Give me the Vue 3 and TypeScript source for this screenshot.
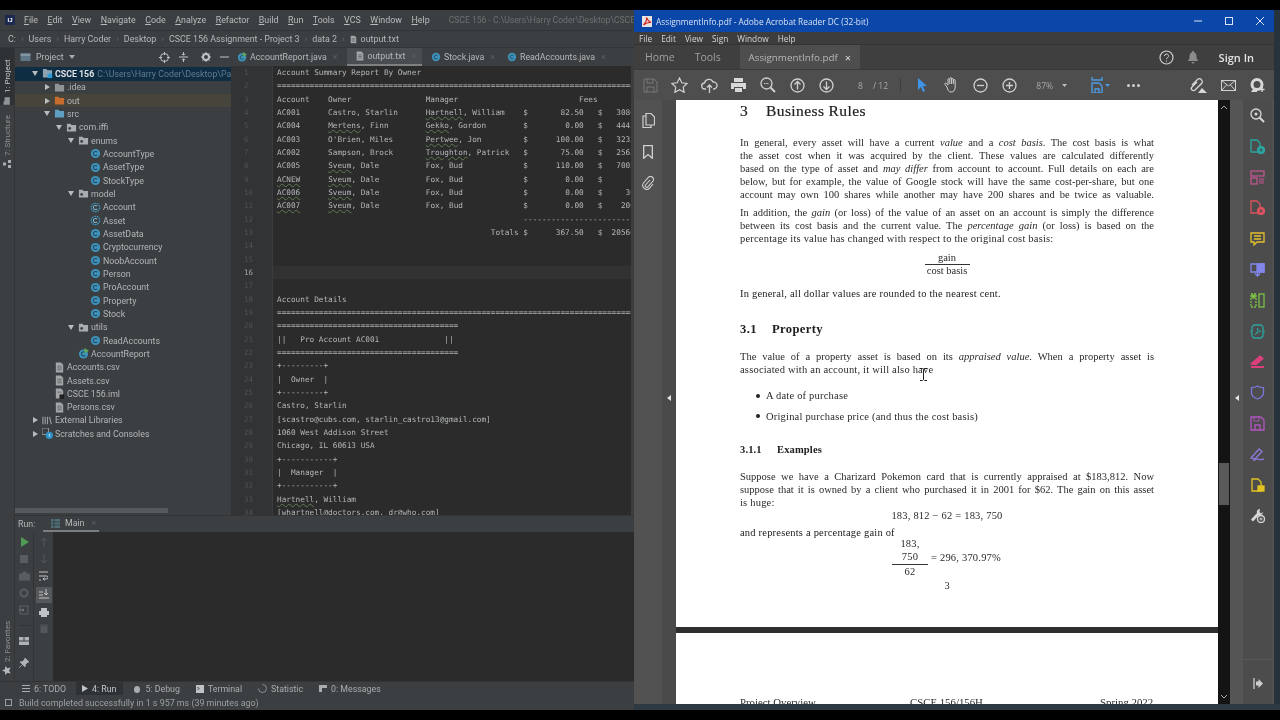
<script setup lang="ts">
const pad = (s: string, n: number) => s + ' '.repeat(Math.max(0, n - s.replace(/~/g, '').length))
const row = (a: string, o: string, m: string, f: string, r: string) =>
  pad(a, 11) + pad(o, 21) + pad(m, 21) + '$' + f.padStart(12) + '   $' + r

const rawLines: string[] = [
  'Account Summary Report By Owner',
  '='.repeat(90),
  pad('Account', 11) + pad('Owner', 21) + pad('Manager', 21) + '            Fees' .padStart(13) + '          R',
  row('AC001', 'Castro, Starlin', '~Hartnell~, William', '82.50', '   3086'),
  row('AC004', '~Mertens~, Finn', '~Gekko~, Gordon', '0.00', '   4442'),
  row('AC003', "O'Brien, Miles", '~Pertwee~, Jon', '100.00', '   3232'),
  row('AC002', 'Sampson, Brock', '~Troughton~, Patrick', '75.00', '   2565'),
  row('AC005', '~Sveum~, Dale', 'Fox, Bud', '110.00', '   7002'),
  row('~ACNEW~', '~Sveum~, Dale', 'Fox, Bud', '0.00', ''),
  row('~AC006~', '~Sveum~, Dale', 'Fox, Bud', '0.00', '     30'),
  row('~AC007~', '~Sveum~, Dale', 'Fox, Bud', '0.00', '    200'),
  ' '.repeat(53) + '-'.repeat(40),
  ' '.repeat(46) + 'Totals $' + '367.50'.padStart(12) + '   $  20560',
  '',
  '',
  '',
  '',
  'Account Details',
  '='.repeat(90),
  '='.repeat(39),
  '||   Pro Account AC001              ||',
  '='.repeat(39),
  '+---------+',
  '|  Owner  |',
  '+---------+',
  'Castro, Starlin',
  '[scastro@cubs.com, starlin_castro13@gmail.com]',
  '1060 West Addison Street',
  'Chicago, IL 60613 USA',
  '+-----------+',
  '|  Manager  |',
  '+-----------+',
  '~Hartnell~, William',
  '[whartnell@doctors.com, dr@who.com]',
]
const lines = rawLines.map((l, i) => ({
  n: i + 1,
  segs: l.split('~').map((t, k) => ({ t, typo: k % 2 === 1 })),
}))

type Node = { label: string; lvl: number; icon: string; arrow?: 'o' | 'c'; cls?: string; path?: string }
const tree: Node[] = [
  { label: 'CSCE 156', lvl: 0, icon: 'mod', arrow: 'o', cls: 'sel', path: 'C:\\Users\\Harry Coder\\Desktop\\PasswordManager' },
  { label: '.idea', lvl: 1, icon: 'folder', arrow: 'c' },
  { label: 'out', lvl: 1, icon: 'orange', arrow: 'c', cls: 'out' },
  { label: 'src', lvl: 1, icon: 'blue', arrow: 'o' },
  { label: 'com.iffi', lvl: 2, icon: 'pkg', arrow: 'o' },
  { label: 'enums', lvl: 3, icon: 'pkg', arrow: 'o' },
  { label: 'AccountType', lvl: 4, icon: 'cls' },
  { label: 'AssetType', lvl: 4, icon: 'cls' },
  { label: 'StockType', lvl: 4, icon: 'cls' },
  { label: 'model', lvl: 3, icon: 'pkg', arrow: 'o' },
  { label: 'Account', lvl: 4, icon: 'abs' },
  { label: 'Asset', lvl: 4, icon: 'abs' },
  { label: 'AssetData', lvl: 4, icon: 'cls' },
  { label: 'Cryptocurrency', lvl: 4, icon: 'cls' },
  { label: 'NoobAccount', lvl: 4, icon: 'cls' },
  { label: 'Person', lvl: 4, icon: 'cls' },
  { label: 'ProAccount', lvl: 4, icon: 'cls' },
  { label: 'Property', lvl: 4, icon: 'cls' },
  { label: 'Stock', lvl: 4, icon: 'cls' },
  { label: 'utils', lvl: 3, icon: 'pkg', arrow: 'o' },
  { label: 'ReadAccounts', lvl: 4, icon: 'cls' },
  { label: 'AccountReport', lvl: 3, icon: 'main' },
  { label: 'Accounts.csv', lvl: 1, icon: 'file' },
  { label: 'Assets.csv', lvl: 1, icon: 'file' },
  { label: 'CSCE 156.iml', lvl: 1, icon: 'iml' },
  { label: 'Persons.csv', lvl: 1, icon: 'file' },
  { label: 'External Libraries', lvl: 0, icon: 'libs', arrow: 'c' },
  { label: 'Scratches and Consoles', lvl: 0, icon: 'scr', arrow: 'c' },
]
const menu = ['File', 'Edit', 'View', 'Navigate', 'Code', 'Analyze', 'Refactor', 'Build', 'Run', 'Tools', 'VCS', 'Window', 'Help']
const crumbs = ['C:', 'Users', 'Harry Coder', 'Desktop', 'CSCE 156 Assignment - Project 3', 'data 2']
const tabs = [
  { t: 'AccountReport.java', icon: 'main' },
  { t: 'output.txt', icon: 'file', on: true },
  { t: 'Stock.java', icon: 'cls' },
  { t: 'ReadAccounts.java', icon: 'cls' },
]
const para1 = [
  ['In general, every asset will have a current ', 'value', ' and a ', 'cost basis', '. The cost basis is what'],
  ['the asset cost when it was acquired by the client. These values are calculated differently'],
  ['based on the type of asset and ', 'may differ', ' from account to account. Full details on each are'],
  ['below, but for example, the value of Google stock will have the same cost-per-share, but one'],
  ['account may own 100 shares while another may have 200 shares and be twice as valuable.'],
]
const para2 = [
  ['In addition, the ', 'gain', ' (or loss) of the value of an asset on an account is simply the difference'],
  ['between its cost basis and the current value. The ', 'percentage gain', ' (or loss) is based on the'],
]
const para3 = ['The value of a property asset is based on its ', 'appraised value', '. When a property asset is']
const para4 = [
  'Suppose we have a Charizard Pokemon card that is currently appraised at $183,812. Now',
  'suppose that it is owned by a client who purchased it in 2001 for $62. The gain on this asset',
]
const toolsRight = [
  { c: '#2ba5a0', k: 'doc', b: 'o' },
  { c: '#c0568f', k: 'org' },
  { c: '#d9535f', k: 'doc', b: 'p' },
  { c: '#e3c02d', k: 'cmt' },
  { c: '#8285ea', k: 'cmb' },
  { c: '#7cc143', k: 'cmp' },
  { c: '#2ba5a0', k: 'xpt' },
  { c: '#dd3f7d', k: 'sgn' },
  { c: '#7a78dc', k: 'shd' },
  { c: '#b356c4', k: 'sv' },
  { c: '#8f78d8', k: 'cert' },
  { c: '#e2c322', k: 'snd' },
  { c: '#d8d8d8', k: 'wr' },
]
</script>

<template>
  <div class="screen">
    <svg width="0" height="0" class="defs">
      <defs>
        <symbol id="i-folder" viewBox="0 0 12 10"><path d="M1 1h4l1 1.400h5v7H1z" fill="#8f9497" /></symbol>
        <symbol id="i-orange" viewBox="0 0 12 10"><path d="M1 1h4l1 1.400h5v7H1z" fill="#c66c2e" /></symbol>
        <symbol id="i-blue" viewBox="0 0 12 10"><path d="M1 1h4l1 1.400h5v7H1z" fill="#5e9fc2" /></symbol>
        <symbol id="i-pkg" viewBox="0 0 12 10"><path d="M1 1h4l1 1.400h5v7H1z" fill="#a9adaf" /><circle cx="4" cy="6" r="1.500" fill="#3c3f41" /></symbol>
        <symbol id="i-mod" viewBox="0 0 12 10"><path d="M1 0h4l1 1.400h5v8H1z" fill="#8fa2b0" /><rect x="6" y="5" width="5" height="5" fill="#2f9bd6" /></symbol>
        <symbol id="i-cls" viewBox="0 0 12 12"><circle cx="6" cy="6" r="5" fill="#3e93bd" /><path d="M7.800 4.500A2.300 2.300 0 1 0 7.800 7.500" fill="none" stroke="#24465a" stroke-width="1.100" /></symbol>
        <symbol id="i-abs" viewBox="0 0 12 12"><circle cx="6" cy="6" r="4.600" fill="none" stroke="#3e93bd" stroke-width="1.400" stroke-dasharray="2 .8" /><path d="M7.800 4.500A2.300 2.300 0 1 0 7.800 7.500" fill="none" stroke="#7fb6d0" stroke-width="1.100" /></symbol>
        <symbol id="i-main" viewBox="0 0 12 12"><circle cx="6" cy="6.500" r="5" fill="#3e93bd" /><path d="M7.800 5A2.300 2.300 0 1 0 7.800 8" fill="none" stroke="#24465a" stroke-width="1.100" /><path d="M7 0l5 3-5 3z" fill="#62a85a" /></symbol>
        <symbol id="i-file" viewBox="0 0 10 12"><path d="M1 .5h5.500L9 3v8.500H1z" fill="#a3a7a9" /><path d="M2.500 4.500h5M2.500 6.500h5M2.500 8.500h5" stroke="#5d6163" stroke-width=".9" /></symbol>
        <symbol id="i-iml" viewBox="0 0 10 12"><path d="M1 .5h5.500L9 3v8.500H1z" fill="#a3a7a9" /><path d="M2.500 4.500h5" stroke="#5d6163" stroke-width=".9" /><rect x="5" y="7" width="5" height="5" fill="#1e2022" /></symbol>
        <symbol id="i-libs" viewBox="0 0 12 10"><path d="M1 1v8M3.500 1v8M6 1v8M8.200 1l2 8" stroke="#9aa0a4" stroke-width="1.200" fill="none" /></symbol>
        <symbol id="i-scr" viewBox="0 0 12 12"><rect x="0" y="0" width="7" height="7" fill="none" stroke="#9aa0a4" /><circle cx="8" cy="8" r="4" fill="#2f95c8" /><path d="M8 6.500v3" stroke="#d6ecf7" /></symbol>
      </defs>
    </svg>

    <section class="ide">
      <header class="menubar">
        <span class="logo">IJ</span>
        <nav class="menus"><span v-for="m in menu" :key="m">{{ m }}</span></nav>
        <span class="ide-title">CSCE 156 - C:\Users\Harry Coder\Desktop\CSCE 156 Assignment - Project 3</span>
      </header>
      <div class="crumbs">
        <template v-for="c in crumbs" :key="c"><span>{{ c }}</span><i class="sep">›</i></template>
        <svg class="ic9" viewBox="0 0 10 12"><use href="#i-file" /></svg>
        <span>output.txt</span>
      </div>
      <div class="ide-body">
        <aside class="strip">
          <div class="vtab active"><svg width="9" height="8" viewBox="0 0 12 10"><use href="#i-folder" /></svg><span>1: Project</span></div>
          <div class="vtab"><svg width="8" height="8" viewBox="0 0 8 8"><path d="M2.500 0h3v3h-3zM0 5h3v3H0zM5 5h3v3H5z" fill="#a9adaf" /></svg><span>7: Structure</span></div>
          <div class="vtab fav"><svg width="9" height="9" viewBox="0 0 10 10"><path d="M5 0l1.500 3.300 3.500.4-2.600 2.300.8 3.600L5 7.800 1.800 9.600l.8-3.600L0 3.700l3.500-.4z" fill="#b4b8ba" /></svg><span>2: Favorites</span></div>
        </aside>
        <div class="ide-main">
          <div class="top">
            <div class="project">
              <div class="ph">
                <svg width="11" height="10" viewBox="0 0 11 10"><rect x=".5" y="1" width="10" height="8" fill="#5f7887" /><path d="M.5 3h10" stroke="#a9b4ba" /></svg>
                <span class="ph-t">Project</span>
                <svg width="6" height="4" viewBox="0 0 6 4"><path d="M0 0h6L3 4z" fill="#a9adaf" /></svg>
                <div class="ph-tools">
                  <svg width="11" height="11" viewBox="0 0 11 11"><circle cx="5.500" cy="5.500" r="4" fill="none" stroke="#c0c3c5" /><path d="M5.500 0v3M5.500 8v3M0 5.500h3M8 5.500h3" stroke="#c0c3c5" /></svg>
                  <svg width="9" height="10" viewBox="0 0 9 10"><path d="M0 5h9M4.500 0v3M3 1.800l1.500 1.500L6 1.800M4.500 10V7M3 8.200l1.500-1.500L6 8.200" stroke="#c0c3c5" fill="none" /></svg>
                  <svg class="gear" width="10" height="10" viewBox="0 0 10 10"><circle cx="5" cy="5" r="3" fill="none" stroke="#c0c3c5" stroke-width="2" /><path d="M5 0v2M5 8v2M0 5h2M8 5h2M1.500 1.500l1.300 1.300M7.200 7.200l1.300 1.300M8.500 1.500L7.200 2.800M1.500 8.500l1.300-1.300" stroke="#c0c3c5" /></svg>
                  <svg width="9" height="2" viewBox="0 0 9 2"><path d="M0 1h9" stroke="#c0c3c5" /></svg>
                </div>
              </div>
              <ul class="tree">
                <li v-for="n in tree" :key="n.label" class="node" :class="n.cls" :style="{ paddingLeft: 14 + n.lvl * 12 + 'px' }">
                  <span class="arrow"><i v-if="n.arrow" :class="n.arrow"></i></span>
                  <svg class="nic" viewBox="0 0 12 12"><use :href="'#i-' + n.icon" /></svg>
                  <b v-if="n.path">{{ n.label }}</b><span v-else>{{ n.label }}</span>
                  <em v-if="n.path">{{ n.path }}</em>
                </li>
              </ul>
              <div class="hscroll"><div class="thumb"></div></div>
            </div>
            <div class="editor">
              <div class="tabs">
                <div v-for="t in tabs" :key="t.t" class="tab" :class="{ on: t.on }">
                  <svg class="tic" viewBox="0 0 12 12"><use :href="'#i-' + t.icon" /></svg>
                  <span>{{ t.t }}</span><i>×</i>
                </div>
              </div>
              <div class="code">
                <div v-for="l in lines" :key="l.n" class="ln" :class="{ cur: l.n === 16 }">
                  <span class="num">{{ l.n }}</span>
                  <span class="txt"><template v-for="(s, k) in l.segs" :key="k"><span :class="{ typo: s.typo }">{{ s.t }}</span></template></span>
                </div>
              </div>
            </div>
          </div>
          <div class="run">
            <div class="run-head">
              <span class="run-l">Run:</span>
              <div class="run-tab">
                <svg width="9" height="9" viewBox="0 0 9 9"><rect width="9" height="9" fill="#4e6f78" /><path d="M0 3h9M0 6h9M3 0v9" stroke="#333" stroke-width=".7" /></svg>
                <span>Main</span><i>×</i>
              </div>
            </div>
            <div class="run-body">
              <div class="rtools a">
                <svg width="9" height="10" viewBox="0 0 9 10"><path d="M1 0l8 5-8 5z" fill="#4f9b52" /></svg>
                <svg width="8" height="8" viewBox="0 0 8 8"><rect width="8" height="8" fill="#5a5d5f" /></svg>
                <svg width="11" height="9" viewBox="0 0 11 9"><path d="M0 2h3l1-2h3l1 2h3v7H0z" fill="#5a5d5f" /></svg>
                <svg width="10" height="10" viewBox="0 0 10 10"><circle cx="5" cy="5" r="3.500" fill="none" stroke="#5a5d5f" stroke-width="2" /></svg>
                <svg width="10" height="10" viewBox="0 0 10 10"><path d="M1 1h8v8H1z" fill="none" stroke="#5f6264" /><path d="M0 5h5M3.500 3.500L5 5 3.500 6.500" fill="none" stroke="#7a7d7f" /></svg>
                <i class="rsep"></i>
                <svg width="10" height="8" viewBox="0 0 10 8"><path d="M0 0h4.500v3.500H0zM5.500 0H10v3.500H5.500zM0 4.500h10V8H0z" fill="#b0b3b5" /></svg>
                <svg class="pin" width="10" height="10" viewBox="0 0 10 10"><path d="M6 0l4 4-1.500.5L6.500 6.500 6 9 1 4l2.500-.5L5.500 1.500zM3 7L0 10" fill="#b0b3b5" stroke="#b0b3b5" stroke-width=".7" /></svg>
              </div>
              <div class="rtools b">
                <svg width="8" height="10" viewBox="0 0 8 10"><path d="M4 10V1M1 4l3-3 3 3" fill="none" stroke="#55585a" /></svg>
                <svg width="8" height="10" viewBox="0 0 8 10"><path d="M4 0v9M1 6l3 3 3-3" fill="none" stroke="#55585a" /></svg>
                <svg width="9" height="11" viewBox="0 0 9 11"><path d="M0 1h9M0 5h7.500a1.500 1.500 0 0 1 0 3H4M5.500 6.500L4 8l1.500 1.500M0 9h2" fill="none" stroke="#c0c3c5" /></svg>
                <span class="rbox"><svg width="10" height="10" viewBox="0 0 10 10"><path d="M0 3h4M0 6h4M0 9h10M7 0v6M5 4l2 2 2-2" fill="none" stroke="#c0c3c5" /></svg></span>
                <svg width="10" height="9" viewBox="0 0 10 9"><path d="M2 0h6v3H2zM0 3h10v4H8v2H2V7H0z" fill="#c0c3c5" /></svg>
                <svg width="8" height="9" viewBox="0 0 8 9"><path d="M0 1h8M1 2v7h6V2" fill="#55585a" stroke="#55585a" /></svg>
              </div>
              <div class="console"></div>
            </div>
          </div>
        </div>
      </div>
      <div class="toolbar">
        <span class="tw"><svg width="8" height="7" viewBox="0 0 8 7"><path d="M0 .5h8M0 3.500h8M0 6.500h8" stroke="#a9adaf" /></svg>6: TODO</span>
        <span class="tw act"><svg width="6" height="7" viewBox="0 0 6 7"><path d="M0 0l6 3.500L0 7z" fill="#c0c3c5" /></svg>4: Run</span>
        <span class="tw"><svg width="8" height="8" viewBox="0 0 8 8"><ellipse cx="4" cy="4.500" rx="3" ry="3.500" fill="#a9adaf" /></svg>5: Debug</span>
        <span class="tw"><svg width="8" height="8" viewBox="0 0 8 8"><rect width="8" height="8" fill="#c0c3c5" /><path d="M1.500 2l1.500 1.500L1.500 5" stroke="#333" fill="none" /></svg>Terminal</span>
        <span class="tw"><svg width="9" height="9" viewBox="0 0 9 9"><path d="M4.500.5a4 4 0 1 1-4 4" fill="none" stroke="#8a8d8f" /></svg>Statistic</span>
        <span class="tw"><svg width="8" height="7" viewBox="0 0 8 7"><path d="M0 0h8v3H3v4H0z" fill="#a9adaf" /></svg>0: Messages</span>
      </div>
      <footer class="status">
        <svg width="7" height="7" viewBox="0 0 7 7"><rect x=".5" y=".5" width="6" height="6" fill="none" stroke="#9a9d9f" /></svg>
        <span>Build completed successfully in 1 s 957 ms (39 minutes ago)</span>
      </footer>
    </section>

    <section class="acro">
      <header class="title">
        <svg width="10" height="11" viewBox="0 0 10 11"><rect width="10" height="11" fill="#e8e3e3" /><path d="M1.500 9C4 6 5 3.500 4.500 1.500c1 2.500 2 4 4.500 5-2.500-.3-5 .6-7.500 2.500z" fill="none" stroke="#d0281f" stroke-width="1.200" /></svg>
        <span class="t-text">AssignmentInfo.pdf - Adobe Acrobat Reader DC (32-bit)</span>
        <div class="win">
          <svg width="8" height="8" viewBox="0 0 8 8"><path d="M0 4h8" stroke="#d7e3f5" /></svg>
          <svg width="8" height="8" viewBox="0 0 8 8"><rect x=".5" y=".5" width="7" height="7" fill="none" stroke="#d7e3f5" /></svg>
          <svg width="8" height="8" viewBox="0 0 8 8"><path d="M0 0l8 8M8 0L0 8" stroke="#d7e3f5" /></svg>
        </div>
      </header>
      <div class="a-menu"><span>File</span><span>Edit</span><span>View</span><span>Sign</span><span>Window</span><span>Help</span></div>
      <div class="a-tabs">
        <span class="a-home">Home</span><span class="a-tools">Tools</span>
        <div class="a-doc"><span>AssignmentInfo.pdf</span><b>×</b></div>
        <div class="a-right">
          <svg width="15" height="15" viewBox="0 0 15 15"><circle cx="7.500" cy="7.500" r="6.500" fill="none" stroke="#d0d0d0" stroke-width="1.200" /><path d="M5.500 6a2 2 0 1 1 3 1.700c-.7.4-1 .8-1 1.500M7.500 10.500v1.200" fill="none" stroke="#d0d0d0" /></svg>
          <svg class="bell" width="12" height="13" viewBox="0 0 12 13"><path d="M6 0a1 1 0 0 1 1 1.200C9 2 9.500 3.500 9.500 6c0 2 1 3 2 4H.5c1-1 2-2 2-4 0-2.500.5-4 2.500-4.800A1 1 0 0 1 6 0zM4.500 11h3a1.500 1.500 0 0 1-3 0z" fill="#8b8b8b" /></svg>
          <span class="signin">Sign In</span>
        </div>
      </div>
      <div class="a-bar">
        <div class="slot"><svg width="15" height="15" viewBox="0 0 15 15"><path d="M1 1h10l3 3v10H1z M4 1v4h6V1M4 14V9h7v5" fill="none" stroke="#777" /></svg></div>
        <div class="slot"><svg width="17" height="16" viewBox="0 0 17 16"><path d="M8.500 1l2.300 4.800 5.200.7-3.800 3.600 1 5.200-4.700-2.600-4.700 2.600 1-5.200L1 6.500l5.200-.7z" fill="none" stroke="#d0d0d0" stroke-width="1.200" /></svg></div>
        <div class="slot"><svg width="17" height="15" viewBox="0 0 17 15"><path d="M5 11H4a3 3 0 0 1-.5-6A4.500 4.500 0 0 1 12 4a3.500 3.500 0 0 1 1 7h-1M8.500 15V7M6 9.500l2.500-2.500L11 9.500" fill="none" stroke="#d0d0d0" stroke-width="1.300" /></svg></div>
        <div class="slot"><svg width="15" height="14" viewBox="0 0 15 14"><path d="M3 0h9v4H3zM0 5h15v6h-3V9H3v2H0zM4 10h7v4H4z" fill="#d8d8d8" /></svg></div>
        <div class="slot"><svg width="16" height="16" viewBox="0 0 16 16"><circle cx="6.500" cy="6.500" r="5.500" fill="none" stroke="#d0d0d0" stroke-width="1.300" /><path d="M10.500 10.500L15 15" stroke="#d0d0d0" stroke-width="2" /><path d="M4 6.500h5" stroke="#d0d0d0" stroke-dasharray="1.500 .8" /></svg></div>
        <div class="slot"><svg width="15" height="15" viewBox="0 0 15 15"><circle cx="7.500" cy="7.500" r="6.500" fill="none" stroke="#d0d0d0" stroke-width="1.300" /><path d="M7.500 11.500v-8M4.500 6.500l3-3 3 3" fill="none" stroke="#d0d0d0" stroke-width="1.300" /></svg></div>
        <div class="slot"><svg width="15" height="15" viewBox="0 0 15 15"><circle cx="7.500" cy="7.500" r="6.500" fill="none" stroke="#d0d0d0" stroke-width="1.300" /><path d="M7.500 3.500v8M4.500 8.500l3 3 3-3" fill="none" stroke="#d0d0d0" stroke-width="1.300" /></svg></div>
        <div class="pg"><span>8</span><span class="pg2">/ 12</span></div>
        <i class="bar-sep"></i>
        <div class="slot"><svg width="10" height="14" viewBox="0 0 10 14"><path d="M1 0l9 8H6l2 5-2 1-2-5-3 3z" fill="#3f94e8" /></svg></div>
        <div class="slot"><svg width="15" height="16" viewBox="0 0 15 16"><path d="M3 10L1 7.500c-.7-1 .5-2 1.500-1L4 8V2.500a.9.9 0 0 1 1.800 0V1.500a.9.9 0 0 1 1.800 0v1a.9.9 0 0 1 1.800 0v1a.9.9 0 0 1 1.800 0V10c0 3-1.500 5-4 5s-3.500-2-4.200-5zM5.800 2.500V7M7.600 2v5M9.400 3v4" fill="none" stroke="#d0d0d0" /></svg></div>
        <div class="slot"><svg width="15" height="15" viewBox="0 0 15 15"><circle cx="7.500" cy="7.500" r="6.500" fill="none" stroke="#d0d0d0" stroke-width="1.300" /><path d="M4 7.500h7" stroke="#d0d0d0" stroke-width="1.300" /></svg></div>
        <div class="slot"><svg width="15" height="15" viewBox="0 0 15 15"><circle cx="7.500" cy="7.500" r="6.500" fill="none" stroke="#d0d0d0" stroke-width="1.300" /><path d="M4 7.500h7M7.500 4v7" stroke="#d0d0d0" stroke-width="1.300" /></svg></div>
        <span class="zoomv">87%</span>
        <svg class="car" width="5" height="3" viewBox="0 0 5 3"><path d="M0 0h5L2.500 3z" fill="#bdbdbd" /></svg>
        <svg class="fit" width="12" height="16" viewBox="0 0 12 16"><path d="M1 0v3h10V0M1 16V6h7l3 3v7zM4 16v-4h4v4" fill="none" stroke="#4e9ae0" stroke-width="1.400" /></svg>
        <svg class="car2" width="5" height="3" viewBox="0 0 5 3"><path d="M0 0h5L2.500 3z" fill="#4e9ae0" /></svg>
        <span class="dots"><i></i><i></i><i></i></span>
        <div class="a-bar-r">
          <svg width="18" height="17" viewBox="0 0 18 17"><path d="M9 7l-5 5a2 2 0 0 0 3 3l7-7a3 3 0 0 0-4-4L4 10" fill="none" stroke="#d8d8d8" stroke-width="1.300" transform="translate(-1 -2)" /><path d="M9 16l4-5 5 5z" fill="#d8d8d8" /></svg>
          <svg width="15" height="11" viewBox="0 0 15 11"><rect x=".5" y=".5" width="14" height="10" fill="none" stroke="#d0d0d0" /><path d="M.5.5L7.500 6l7-5.500M.5 10.500L5.500 5M14.500 10.500L9.500 5" fill="none" stroke="#d0d0d0" /></svg>
          <svg width="15" height="15" viewBox="0 0 15 15"><circle cx="7" cy="6.500" r="5" fill="none" stroke="#d8d8d8" stroke-width="3" /><path d="M1 14c1-3 3-3.500 6-3.500V14z" fill="#d8d8d8" /><path d="M12 9v5M9.500 11.500h5" stroke="#d8d8d8" stroke-width="1.300" /></svg>
        </div>
      </div>
      <div class="a-main">
        <aside class="a-left">
          <svg width="13" height="15" viewBox="0 0 13 15"><path d="M4 .5h5l3.500 3.500v8H4zM4 3H1v11.500h8V12" fill="none" stroke="#d0d0d0" stroke-width="1.200" /></svg>
          <svg width="10" height="14" viewBox="0 0 10 14"><path d="M.7.700h8.600v12.600L5 9.500.7 13.300z" fill="none" stroke="#d0d0d0" stroke-width="1.300" /></svg>
          <svg width="12" height="14" viewBox="0 0 12 14"><path d="M8 4l-4.500 5a1.500 1.500 0 0 0 2.200 2L11 5a3 3 0 0 0-4.300-4L1.500 7a4 4 0 0 0 5.700 5.500L11 8" fill="none" stroke="#d0d0d0" stroke-width="1.100" /></svg>
        </aside>
        <div class="a-gut"><i class="tri-l"></i></div>
        <div class="doc">
          <article class="page p1">
            <h1><span>3</span>Business Rules</h1>
            <div class="para first">
              <div v-for="(l, i) in para1" :key="i" class="j"><template v-for="(s, k) in l" :key="k"><em v-if="k % 2">{{ s }}</em><template v-else>{{ s }}</template></template></div>
            </div>
            <div class="para second">
              <div v-for="(l, i) in para2" :key="i" class="j"><template v-for="(s, k) in l" :key="k"><em v-if="k % 2">{{ s }}</em><template v-else>{{ s }}</template></template></div>
              <div class="l">percentage its value has changed with respect to the original cost basis:</div>
            </div>
            <div class="frac f1"><span class="up">gain</span><span class="dn">cost basis</span></div>
            <p class="l gen">In general, all dollar values are rounded to the nearest cent.</p>
            <h2><span>3.1</span>Property</h2>
            <div class="para pr">
              <div class="j">{{ para3[0] }}<em>{{ para3[1] }}</em>{{ para3[2] }}</div>
              <div class="l">associated with an account, it will also have</div>
            </div>
            <ul class="bul">
              <li><i></i>A date of purchase</li>
              <li class="b2"><i></i>Original purchase price (and thus the cost basis)</li>
            </ul>
            <h3><span>3.1.1</span>Examples</h3>
            <div class="para ex">
              <div v-for="l in para4" :key="l" class="j">{{ l }}</div>
              <div class="l">is huge:</div>
            </div>
            <div class="eq">183, 812 − 62 = 183, 750</div>
            <p class="l rep">and represents a percentage gain of</p>
            <div class="eq2">
              <div class="frac f2"><span class="up">183, 750</span><span class="dn">62</span></div>
              <span>= 296, 370.97%</span>
            </div>
            <div class="pnum">3</div>
            <svg class="ibeam" width="7" height="13" viewBox="0 0 7 13"><path d="M0 .5h2.500l1 1 1-1H7M3.500 1.500v10M0 12.500h2.500l1-1 1 1H7" fill="none" stroke="#222" /></svg>
          </article>
          <article class="page p2">
            <div class="foot"><span>Project Overview</span><span>CSCE 156/156H</span><span>Spring 2022</span></div>
          </article>
        </div>
        <div class="a-scroll">
          <svg width="6" height="4" viewBox="0 0 6 4"><path d="M0 4l3-3 3 3" fill="none" stroke="#aaa" /></svg>
          <i class="a-thumb"></i>
          <svg width="6" height="4" viewBox="0 0 6 4"><path d="M0 0l3 3 3-3" fill="none" stroke="#aaa" /></svg>
        </div>
        <div class="a-gut2"><i class="tri-l"></i></div>
        <aside class="a-rail">
          <svg width="15" height="15" viewBox="0 0 15 15"><circle cx="6" cy="6" r="5" fill="none" stroke="#d8d8d8" stroke-width="1.300" /><path d="M9.500 9.500L14 14" stroke="#d8d8d8" stroke-width="2" /><circle cx="6" cy="6" r="1.500" fill="#d8d8d8" /></svg>
          <svg v-for="t in toolsRight" :key="t.c + t.k" width="15" height="15" viewBox="0 0 15 15" fill="none" :stroke="t.c" stroke-width="1.300">
            <template v-if="t.k === 'doc'"><path d="M1 1h6l3 3v9H1z" /><circle cx="11" cy="11" r="3.500" :fill="t.c" /><path d="M9.500 11h3M11 9.500v3" stroke="#444" stroke-width=".9" /></template>
            <template v-else-if="t.k === 'org'"><rect x="1" y="1" width="13" height="5" /><rect x="1" y="8" width="6" height="6" /><path d="M9 9h5M9 11h5M9 13h5" stroke-width="1" /></template>
            <template v-else-if="t.k === 'cmt'"><path d="M1 2h13v9H7l-3 3v-3H1z" /><path d="M4 5h7M4 8h7" /></template>
            <template v-else-if="t.k === 'cmb'"><path d="M1 2h6v8H1zM8 2h6v8H8z" /><path d="M8 2h6v8H8z" :fill="t.c" /><path d="M7.500 9v5M5 11.500l2.500 2.500 2.500-2.500" /></template>
            <template v-else-if="t.k === 'cmp'"><rect x="1" y="1" width="5" height="13" stroke-dasharray="2 1" /><rect x="9" y="1" width="5" height="13" /><rect x="1.500" y="1.500" width="4" height="4" :fill="t.c" stroke="none" /></template>
            <template v-else-if="t.k === 'xpt'"><path d="M4 1h7l2 2v9l-2 2H4l-2-2V3z" /><path d="M0 7.500l2-2M0 7.500l2 2M15 7.500l-2-2M15 7.500l-2 2M5 11c2-2 3-5 2.500-7 .5 2 2 3 3.500 3.500-2 0-4 1.500-6 3.500z" stroke-width=".9" /></template>
            <template v-else-if="t.k === 'sgn'"><path d="M1 10L10 2l3 2.500-7 6z" :fill="t.c" /><path d="M1 13h13" stroke-width="2" /></template>
            <template v-else-if="t.k === 'shd'"><path d="M7.500 1c2 1.300 4 1.700 6 1.700v5c0 3-2.500 5-6 6.300-3.500-1.300-6-3.300-6-6.300v-5c2 0 4-.4 6-1.700z" /></template>
            <template v-else-if="t.k === 'sv'"><path d="M1 1h10l3 3v10H1z" /><path d="M5 14V9h5v5" /><path d="M4 1v4h5V1" stroke-width=".9" /></template>
            <template v-else-if="t.k === 'cert'"><path d="M1 11L9 2l3 2.500L5 12z" /><path d="M3 13c3 1 2-2 5-1s2 1 6 0" /></template>
            <template v-else-if="t.k === 'snd'"><path d="M2 1h6l3 3v9H2z" /><rect x="8" y="8" width="6" height="5" :fill="t.c" /></template>
            <template v-else-if="t.k === 'wr'"><path d="M10 1a3 3 0 0 0-3 4L1 11.500 3 13.500 9 7a3 3 0 0 0 4-3l-2 1.500L9.500 4z" :fill="t.c" stroke="none" /><circle cx="11" cy="11" r="3.500" /><path d="M9.500 11h3M11 9.500v3" stroke-width=".9" /></template>
          </svg>
          <div class="rail-end">
            <svg width="10" height="11" viewBox="0 0 10 11"><path d="M1 0v11" stroke="#ccc" stroke-width="1.300" /><path d="M3 3.500h2.500V1L10 5.500 5.500 10V7.500H3z" fill="#ccc" /></svg>
          </div>
        </aside>
      </div>
    </section>
  </div>
</template>

<style>
html, body { margin: 0; background: #000; }
</style>

<style scoped>
.screen { width: 1280px; height: 720px; background: #000; padding: 10px 0; box-sizing: border-box; display: flex; overflow: hidden; font-family: Roboto, "Liberation Sans", sans-serif; filter: blur(.3px); }
.defs { position: absolute; }
i { font-style: normal; }
ul { list-style: none; margin: 0; padding: 0; }

/* IDE */
.ide { width: 634px; height: 700px; flex: none; background: #3c3f41; color: #b5b8ba; display: flex; flex-direction: column; font-size: 8.8px; }
.menubar { height: 20px; flex: none; display: flex; align-items: center; padding-left: 5px; overflow: hidden; white-space: nowrap; }
.logo { width: 10px; height: 10px; background: #1c2a52; color: #fff; font: bold 6px/10px "Liberation Sans", sans-serif; text-align: center; flex: none; }
.menus { display: flex; gap: 9.500px; margin-left: 9px; font-size: 8.900px; color: #b9bcbe; }
.menus span::first-letter { text-decoration: underline; }
.ide-title { margin-left: 19px; color: #6d7173; font-size: 8.600px; }
.crumbs { height: 18px; flex: none; display: flex; align-items: center; gap: 4px; padding-left: 8px; font-size: 8.900px; border-top: 1px solid #333638; border-bottom: 1px solid #333638; box-sizing: border-box; }
.sep { color: #666; margin: 0 1px; }
.ic9 { width: 7px; height: 9px; }
.ide-body { flex: 1; min-height: 0; display: flex; }
.strip { width: 15px; flex: none; display: flex; flex-direction: column; border-right: 1px solid #323436; box-sizing: border-box; position: relative; }
.vtab { writing-mode: vertical-rl; transform: rotate(180deg); display: flex; align-items: center; justify-content: flex-start; gap: 4px; height: 57px; width: 14px; font-size: 8px; flex: none; }
.vtab.active { background: #2f3234; color: #c4c7c9; margin-top: 0; }
.vtab:nth-child(2) { margin-top: 6px; color: #8e9193; }
.vtab svg { transform: rotate(90deg); }
.vtab.fav { margin-top: auto; margin-bottom: 6px; color: #8e9193; }
.ide-main { flex: 1; min-width: 0; display: flex; flex-direction: column; }
.top { height: 467px; flex: none; display: flex; }
.project { width: 216px; flex: none; display: flex; flex-direction: column; }
.ph { height: 18px; flex: none; display: flex; align-items: center; padding-left: 5px; gap: 5px; }
.ph-t { font-size: 8.800px; }
.ph-tools { margin-left: 79px; display: flex; align-items: center; gap: 9px; }
.gear { margin-left: 4px; }
.tree { flex: 1; min-height: 0; padding-top: 1.300px; overflow: hidden; }
.node { height: 13.330px; display: flex; align-items: center; white-space: nowrap; overflow: hidden; font-size: 8.800px; color: #b3b6b8; }
.node.sel { background: #0e2c42; color: #dfe3e6; }
.node.sel b { font-weight: 700; font-size: 8.800px; }
.node.sel em { font-style: normal; color: #5f7c90; margin-left: 3px; }
.node.out { background: #47443c; }
.arrow { width: 12px; flex: none; display: flex; justify-content: center; }
.arrow i { display: block; width: 0; height: 0; }
.arrow .o { border-left: 3px solid transparent; border-right: 3px solid transparent; border-top: 5px solid #b9bcbe; }
.arrow .c { border-top: 3px solid transparent; border-bottom: 3px solid transparent; border-left: 5px solid #b9bcbe; }
.nic { width: 11px; height: 11px; flex: none; margin-right: 3px; margin-left: 1px; margin-right: 2px; }
.hscroll { height: 5px; margin-bottom: 2px; flex: none; }
.thumb { width: 153px; height: 5px; background: #575a5c; }
.editor { flex: 1; min-width: 0; display: flex; flex-direction: column; background: #2b2b2b; overflow: hidden; }
.tabs { height: 18px; flex: none; background: #3c3f41; display: flex; white-space: nowrap; overflow: hidden; }
.tab { display: flex; align-items: center; padding: 0 6px 0 6px; gap: 3px; font-size: 8.800px; box-sizing: border-box; }
.tab .tic { width: 10px; height: 10px; flex: none; }
.tab i { color: #5e6163; margin-left: 3px; }
.tab.on { background: #4a4d4f; border-bottom: 2px solid #7d8082; margin: 0 3px; padding-left: 8px; }
.code { flex: 1; min-height: 0; overflow: hidden; font-family: "DejaVu Sans Mono", "Liberation Mono", monospace; font-size: 7.720px; color: #b3b6b8; border-right: 3px solid #3b3d3f; }
.ln { height: 13.330px; line-height: 13.330px; display: flex; white-space: pre; }
.num { width: 42px; box-sizing: border-box; padding-left: 13px; flex: none; background: #313335; color: #4e5254; font-size: 7.500px; border-right: 1px solid #3a3c3e; }
.txt { padding-left: 4px; }
.ln.cur .txt { flex: 1; background: #323232; }
.ln.cur .num { color: #a4a7a9; }
.typo { text-decoration: underline wavy #5f7a50 .5px; text-underline-offset: 1px; }
.run { flex: 1; min-height: 0; display: flex; flex-direction: column; border-top: 1px solid #323436; box-sizing: border-box; }
.run-head { height: 16px; flex: none; display: flex; align-items: center; }
.run-l { padding-left: 3px; width: 25px; font-size: 8.800px; }
.run-tab { width: 56px; height: 16px; display: flex; align-items: center; gap: 5px; padding-left: 8px; box-sizing: border-box; border-bottom: 2px solid #7b7e80; font-size: 8.800px; }
.run-tab i { color: #5e6163; margin-left: 2px; }
.run-body { flex: 1; min-height: 0; display: flex; }
.rtools { flex: none; display: flex; flex-direction: column; align-items: center; padding-top: 5px; }
.rtools.a { width: 18px; gap: 7px; border-right: 1px solid #323436; }
.rtools.a svg { height: 10px; }
.rtools.b { width: 19px; gap: 7px; }
.rsep { width: 13px; height: 1px; background: #323436; margin: 3px 0; }
.pin { margin-top: 5px; }
.rbox { background: #56595b; padding: 2px 3px; margin: -2px 0; display: block; height: 12px; }
.console { flex: 1; background: #2b2b2b; }
.toolbar { height: 14px; flex: none; display: flex; align-items: center; padding-left: 22px; gap: 16px; font-size: 8.800px; border-top: 1px solid #323436; box-sizing: border-box; }
.tw { display: flex; align-items: center; gap: 4px; height: 13px; color: #a9acae; }
.tw.act { background: #2f3234; padding: 0 7px 0 6px; margin: 0 -6px; color: #c4c7c9; }
.status { height: 15px; flex: none; display: flex; align-items: center; gap: 7px; padding-left: 5px; font-size: 8.900px; color: #9c9fa1; }

/* Acrobat */
.acro { width: 646px; height: 694px; flex: none; background: #4e4e4e; display: flex; flex-direction: column; color: #d0d0d0; border-right: 6px solid #27333c; box-sizing: border-box; box-shadow: 0 6px 0 #2d3a44; font-family: "Open Sans", "Liberation Sans", sans-serif; }
.title { height: 22px; flex: none; background: #0b47a8; display: flex; align-items: center; padding-left: 8px; gap: 4px; color: #d8e3f5; font-size: 8.600px; white-space: nowrap; }
.t-text { font-size: 8.300px; }
.win { margin-left: auto; display: flex; gap: 23px; align-items: center; padding-right: 10px; }
.a-menu { height: 12px; flex: none; background: #3d3d3d; display: flex; gap: 9px; align-items: center; padding-left: 5px; font-size: 8.300px; color: #d5d5d5; }
.a-tabs { height: 25px; flex: none; background: #3f3f3f; display: flex; align-items: stretch; border-top: 1px solid #333; box-sizing: border-box; }
.a-home, .a-tools { font-size: 10.500px; color: #a0a0a0; align-self: center; }
.a-home { margin-left: 11px; }
.a-tools { margin-left: 20px; }
.a-doc { margin-left: 19px; width: 120px; background: #4e4e4e; display: flex; align-items: center; justify-content: center; gap: 7px; font-size: 9.800px; color: #b8b8b8; }
.a-doc b { color: #ddd; font-weight: 400; font-size: 11px; }
.a-right { margin-left: auto; display: flex; align-items: center; padding-right: 20px; }
.bell { margin-left: 13px; }
.signin { margin-left: 20px; font-size: 11px; font-weight: 600; color: #e2e2e2; }
.a-bar { height: 31px; flex: none; display: flex; align-items: center; padding-left: 2px; border-top: 1px solid #3a3a3a; box-sizing: border-box; }
.slot { width: 29.300px; flex: none; display: flex; justify-content: center; }
.pg { width: 58px; display: flex; font-size: 8.500px; color: #a8a8a8; padding-left: 17px; box-sizing: border-box; gap: 10px; }
.pg2 { white-space: nowrap; }
.bar-sep { width: 1px; height: 14px; background: #3e3e3e; margin: 0 6px 0 1px; }
.zoomv { margin-left: 12px; font-size: 8.500px; color: #a8a8a8; }
.car { margin-left: 9px; }
.fit { margin-left: 24px; }
.car2 { margin-left: 2px; }
.dots { display: flex; gap: 2px; margin-left: 17px; }
.dots i { width: 3px; height: 3px; border-radius: 50%; background: #d0d0d0; }
.a-bar-r { margin-left: auto; display: flex; align-items: center; gap: 14px; padding-right: 9px; }
.a-main { flex: 1; min-height: 0; display: flex; background: #525252; }
.a-left { width: 28px; flex: none; display: flex; flex-direction: column; align-items: center; gap: 17px; padding-top: 13px; box-sizing: border-box; background: #525252; }
.a-gut { width: 14px; flex: none; background: #4a4a4a; display: flex; align-items: center; justify-content: center; padding-bottom: 8px; box-sizing: border-box; }
.a-gut2 { width: 13px; flex: none; background: #555; display: flex; align-items: center; justify-content: center; padding-bottom: 8px; box-sizing: border-box; }
.tri-l { width: 0; height: 0; border-top: 3.500px solid transparent; border-bottom: 3.500px solid transparent; border-right: 4px solid #e2e2e2; }
.doc { width: 542px; flex: none; overflow: hidden; background: #2e2e2e; font-family: "Liberation Serif", "Times New Roman", serif; color: #2a2a2a; font-size: 10.500px; line-height: 13px; }
.page { background: #fff; box-sizing: border-box; padding: 0 64px; position: relative; }
.p1 { height: 527px; margin-bottom: 6px; }
.p2 { height: 120px; padding-top: 63px; }
h1, h2, h3, p { margin: 0; font-family: inherit; color: #202020; }
h1 { font-size: 15.500px; line-height: 22px; font-weight: 400; letter-spacing: .4px; -webkit-text-stroke: .2px #202020; }
h1 span { display: inline-block; width: 26px; }
h2 { font-size: 12.600px; line-height: 16px; margin-top: 21px; font-weight: 700; letter-spacing: .35px; }
h2 span { display: inline-block; width: 32px; }
h3 { font-size: 10.500px; line-height: 14px; margin-top: 20.500px; font-weight: 700; letter-spacing: .15px; }
h3 span { display: inline-block; width: 37px; }
.j { text-align: justify; text-align-last: justify; height: 13px; white-space: nowrap; }
.l { white-space: nowrap; letter-spacing: .2px; }
.first { margin-top: 14px; }
.second { margin-top: 5px; }
.frac { display: flex; flex-direction: column; align-items: center; }
.frac .up { border-bottom: 1px solid #333; align-self: stretch; text-align: center; }
.f1 { width: 45px; margin: 6px auto 0; }
.f1 .dn { line-height: 12px; }
.gen { margin-top: 10px; }
.pr { margin-top: 12.500px; }
.bul { margin-top: 13.500px; padding-left: 26px; letter-spacing: .2px; }
.bul li { position: relative; }
.bul li i { position: absolute; left: -10px; top: 4.500px; width: 4px; height: 4px; border-radius: 50%; background: #222; }
.bul .b2 { margin-top: 7.500px; }
.ex { margin-top: 12.500px; }
.eq { text-align: center; letter-spacing: .2px; }
.rep { margin-top: 4.500px; }
.eq2 { display: flex; justify-content: center; align-items: center; gap: 3px; margin-top: 4px; height: 28px; letter-spacing: .2px; padding-right: 1px; }
.f2 { width: 36px; }
.f2 .up { padding-bottom: 1px; }
.pnum { text-align: center; margin-top: 8px; }
.ibeam { position: absolute; left: 244px; top: 268px; }
.foot { display: flex; font-size: 10.800px; }
.foot span:nth-child(1) { width: 170px; }
.foot span:nth-child(2) { width: 190px; }
.a-scroll { width: 12px; flex: none; background: #141414; display: flex; flex-direction: column; align-items: center; justify-content: space-between; padding: 5px 0; box-sizing: border-box; position: relative; }
.a-thumb { position: absolute; left: 1px; top: 363px; width: 10px; height: 42px; background: #5a5a5a; }
.a-rail { width: 29px; flex: none; background: #4c4c4c; display: flex; flex-direction: column; align-items: center; gap: 15.800px; padding-top: 8px; box-sizing: border-box; position: relative; }
.rail-end { position: absolute; bottom: 10px; left: 0; right: 0; text-align: center; border-top: 1px solid #5a5a5a; padding-top: 12px; }
</style>
